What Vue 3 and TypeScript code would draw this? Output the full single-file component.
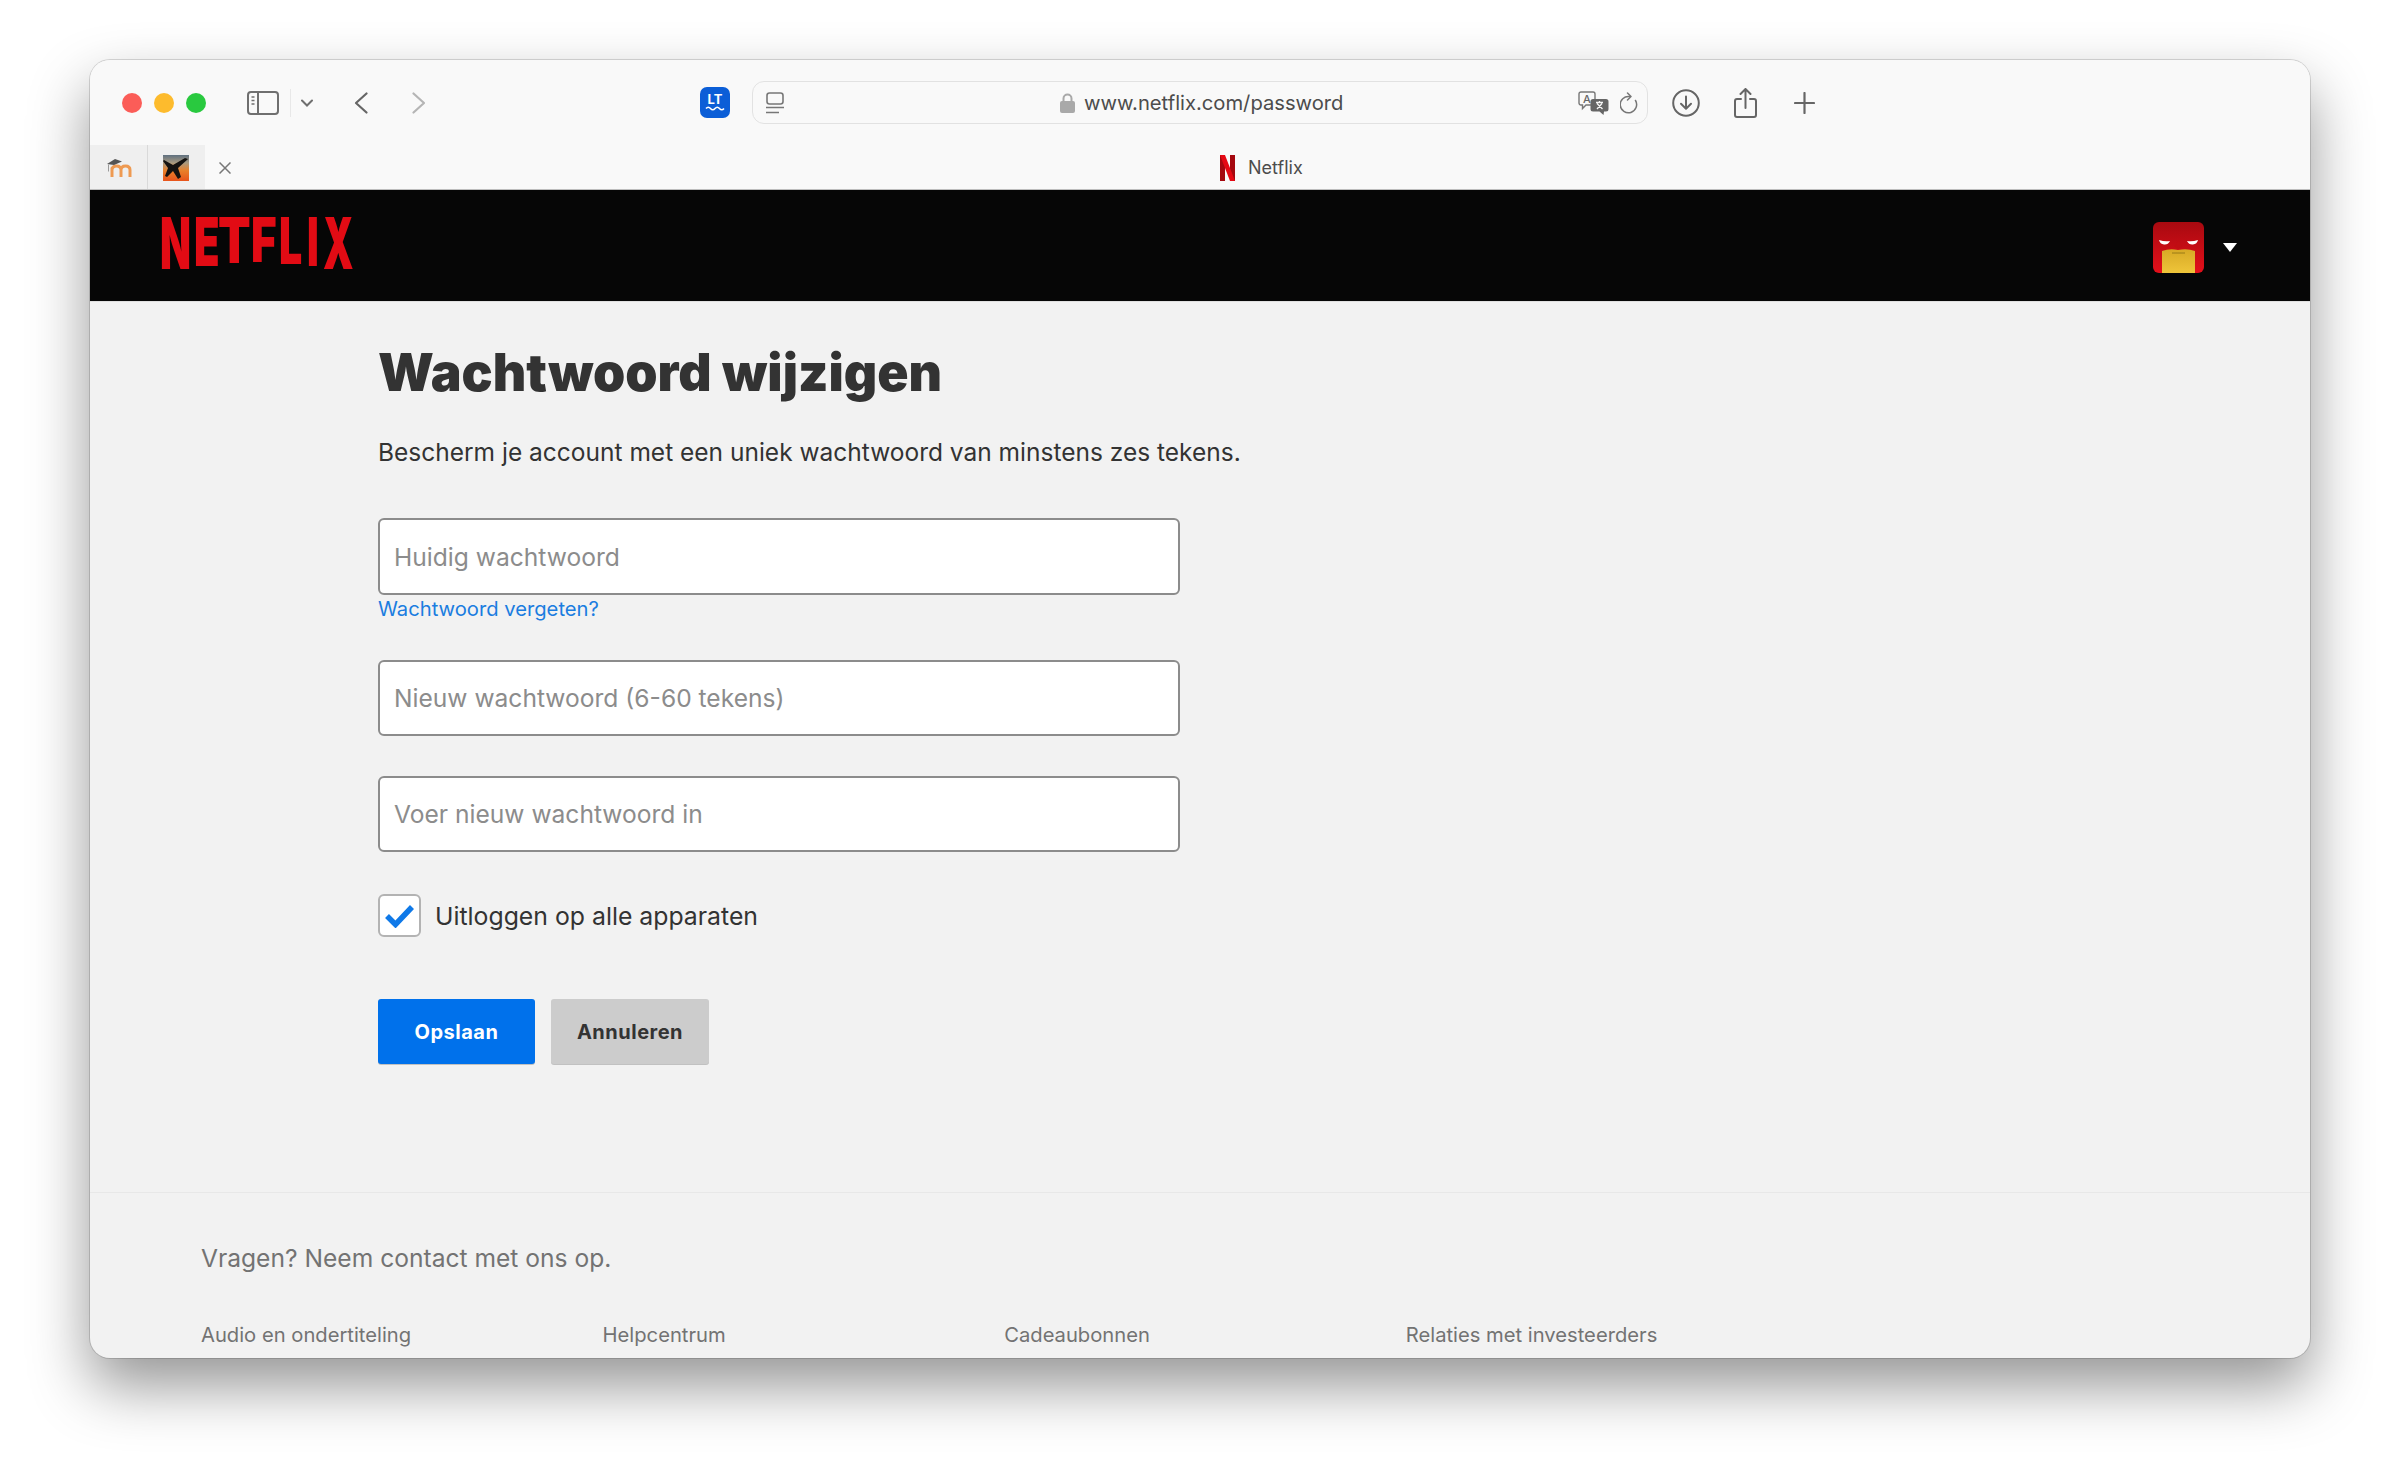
<script setup lang="ts">
const footerLinks: string[] = ['Audio en ondertiteling', 'Helpcentrum', 'Cadeaubonnen', 'Relaties met investeerders']
const logo: { c: string; w: number; sx: number; sy: number }[] = [
  { c: 'N', w: 33.5, sx: 0.56, sy: 1 },
  { c: 'E', w: 24, sx: 0.58, sy: 0.935 },
  { c: 'T', w: 33, sx: 0.66, sy: 0.88 },
  { c: 'F', w: 28, sx: 0.61, sy: 0.86 },
  { c: 'L', w: 28, sx: 0.57, sy: 0.9 },
  { c: 'I', w: 16, sx: 0.56, sy: 0.935 },
  { c: 'X', w: 30, sx: 0.54, sy: 1 }
]
</script>

<template>
  <div class="desktop">
    <div class="window">
      <div class="toolbar">
        <span class="dot red"></span>
        <span class="dot yellow"></span>
        <span class="dot green"></span>
        <svg class="i-side" width="32" height="24" viewBox="0 0 32 24" fill="none" stroke="#6f6f6f" stroke-width="2">
          <rect x="1" y="1" width="30" height="22" rx="3" />
          <path d="M11 1v22" />
          <path d="M4.500 6h3M4.500 9.500h3M4.500 13h3" stroke-width="1.500" />
        </svg>
        <span class="sep"></span>
        <svg class="i-chev" width="12" height="8" viewBox="0 0 12 8" fill="none" stroke="#6f6f6f" stroke-width="2" stroke-linecap="round"><path d="M1 1.500l5 5 5-5" /></svg>
        <svg class="i-back" width="14" height="22" viewBox="0 0 14 22" fill="none" stroke="#666" stroke-width="2.200" stroke-linecap="round" stroke-linejoin="round"><path d="M12.500 1.500L2 11l10.500 9.500" /></svg>
        <svg class="i-fwd" width="14" height="22" viewBox="0 0 14 22" fill="none" stroke="#b5b5b5" stroke-width="2.200" stroke-linecap="round" stroke-linejoin="round"><path d="M1.500 1.500L12 11 1.500 20.500" /></svg>
        <svg class="i-lt" width="30" height="31" viewBox="0 0 30 31">
          <rect width="30" height="31" rx="7" fill="#0b5ed7" />
          <text class="lt-text" x="15" y="16.500" text-anchor="middle">LT</text>
          <path d="M6 21.500q2.250-2.500 4.500 0t4.500 0 4.500 0 4.500 0" fill="none" stroke="#fff" stroke-width="1.600" />
        </svg>
        <div class="urlbar">
          <svg width="18" height="22" viewBox="0 0 18 22" fill="none" stroke="#777" stroke-width="1.600">
            <rect x="1" y="1" width="16" height="11" rx="2.500" />
            <path d="M0 15.500h18M0 20.500h13" />
          </svg>
          <svg class="i-lock" width="15" height="20" viewBox="0 0 15 20">
            <path d="M3.500 9V5.500a4 4 0 0 1 8 0V9" fill="none" stroke="#a9a9a9" stroke-width="2" />
            <rect y="8" width="15" height="12" rx="2" fill="#a9a9a9" />
          </svg>
          <span class="url">www.netflix.com/password</span>
          <svg class="i-trans" width="31" height="24" viewBox="0 0 31 24">
            <path d="M3 1h12a2 2 0 0 1 2 2v9a2 2 0 0 1-2 2H8l-3.500 3.500V14H3a2 2 0 0 1-2-2V3a2 2 0 0 1 2-2z" fill="#f9f9f9" stroke="#777" stroke-width="1.400" />
            <text class="tr-a" x="9" y="11.500" text-anchor="middle">A</text>
            <path d="M15 8h13a2.500 2.500 0 0 1 2.500 2.500V18a2.500 2.500 0 0 1-2.500 2.500h-2l-.5 3.500-4-3.500H15a2.500 2.500 0 0 1-2.500-2.500v-7.500A2.500 2.500 0 0 1 15 8z" fill="#666" />
            <path d="M18 11.500h7M21.500 10v1.500M24 12.500l-5 5.500M19 12.500l5.500 5.500" fill="none" stroke="#f5f5f5" stroke-width="1.300" />
          </svg>
          <svg class="i-reload" width="19" height="22" viewBox="0 0 19 22" fill="none" stroke="#777" stroke-width="1.500" stroke-linecap="round" stroke-linejoin="round">
            <path d="M15.500 8.500A8.200 8.200 0 1 1 9.500 4.500" />
            <path d="M7.500 1l3.500 3.500L7.500 8" />
          </svg>
        </div>
        <svg class="i-dl" width="28" height="28" viewBox="0 0 28 28" fill="none" stroke="#666" stroke-width="2" stroke-linecap="round" stroke-linejoin="round">
          <circle cx="14" cy="14" r="12.800" />
          <path d="M14 7.500v12M9 14.800l5 5 5-5" />
        </svg>
        <svg class="i-share" width="23" height="30" viewBox="0 0 23 30" fill="none" stroke="#666" stroke-width="2" stroke-linecap="round" stroke-linejoin="round">
          <path d="M7 11H3a2 2 0 0 0-2 2v14a2 2 0 0 0 2 2h17a2 2 0 0 0 2-2V13a2 2 0 0 0-2-2h-4" />
          <path d="M11.500 20V1.500M6.500 6l5-5 5 5" />
        </svg>
        <svg class="i-plus" width="21" height="22" viewBox="0 0 21 22" fill="none" stroke="#666" stroke-width="2.200" stroke-linecap="round"><path d="M10.500 1v20M1 11h19" /></svg>
      </div>

      <div class="tabs">
        <div class="tab first">
          <svg class="fav" width="27" height="20" viewBox="0 0 27 20" fill="none">
            <path d="M7 19V9.500M7 12q0-4 4.500-4T16 12v7M16 12q0-4 4.500-4t4.500 4v7" stroke="#ee9a52" stroke-width="3" />
            <path d="M2 6l8-5 7 2.500-8 3.500z" fill="#555" />
            <path d="M3.500 6.500v7" stroke="#999" stroke-width="1" />
          </svg>
        </div>
        <div class="tab">
          <svg class="fav pic" width="26" height="26" viewBox="0 0 26 26">
            <defs>
              <linearGradient id="sky" x1="0" y1="0" x2="0" y2="1">
                <stop offset="0" stop-color="#5f7080" />
                <stop offset=".3" stop-color="#a89a80" />
                <stop offset=".6" stop-color="#e8802a" />
                <stop offset="1" stop-color="#e8541c" />
              </linearGradient>
            </defs>
            <rect width="26" height="26" fill="url(#sky)" />
            <path d="M1 5l9 5 12-7 3 1-10 9 3 9-3 2-5-8-6 6-2-1 3-8-5-7z" fill="#141210" />
          </svg>
        </div>
        <svg class="i-close" width="12" height="12" viewBox="0 0 12 12" fill="none" stroke="#777" stroke-width="1.500"><path d="M.5.500l11 11M11.500.500l-11 11" /></svg>
        <svg class="i-n" width="15" height="26" viewBox="0 0 15 26">
          <path d="M0 0h5v26H0z" fill="#a5080f" />
          <path d="M10 0h5v26h-5z" fill="#a5080f" />
          <path d="M0 0h5l10 26h-5z" fill="#e50914" />
        </svg>
        <span class="tab-title">Netflix</span>
      </div>

      <header class="nf-head">
        <div class="nf-logo" aria-label="Netflix">
          <span v-for="l in logo" :key="l.c" class="slot" :style="{ width: l.w + 'px' }">
            <span class="glyph" :style="{ transform: `scale(${l.sx}, ${l.sy})` }">{{ l.c }}</span>
          </span>
        </div>
        <div class="profile">
          <svg width="51" height="51" viewBox="0 0 51 51">
            <defs>
              <linearGradient id="face" x1="0" y1="0" x2="0" y2="1">
                <stop offset="0" stop-color="#a80a10" />
                <stop offset="1" stop-color="#e30f1a" />
              </linearGradient>
              <linearGradient id="beard" x1="0" y1="0" x2="0" y2="1">
                <stop offset="0" stop-color="#d7a925" />
                <stop offset="1" stop-color="#efc53a" />
              </linearGradient>
            </defs>
            <rect width="51" height="51" rx="6" fill="url(#face)" />
            <path d="M9 51V29q8-3 16-1 9-2 17 1v22z" fill="url(#beard)" />
            <path d="M6 18q6 2 11 1-2 4-6 3.500T6 18zM45 18q-6 2-11 1 2 4 6 3.500t5-4.500z" fill="#fff" />
            <path d="M25.500 19l-4 5 4 3 4-3z" fill="#c00d13" />
            <path d="M19 31h13" stroke="#9a7a16" stroke-width="1" />
          </svg>
          <span class="caret"></span>
        </div>
      </header>

      <main class="content">
        <h1>Wachtwoord wijzigen</h1>
        <p class="sub">Bescherm je account met een uniek wachtwoord van minstens zes tekens.</p>
        <input class="field first-field" type="password" placeholder="Huidig wachtwoord" />
        <a class="forgot">Wachtwoord vergeten?</a>
        <input class="field second-field" type="password" placeholder="Nieuw wachtwoord (6-60 tekens)" />
        <input class="field third-field" type="password" placeholder="Voer nieuw wachtwoord in" />
        <label class="check">
          <span class="box">
            <svg width="29" height="24" viewBox="0 0 29 24" fill="none" stroke="#0f79e8" stroke-width="5.500"><path d="M2 12l8.500 8.500L27 3" /></svg>
          </span>
          <span>Uitloggen op alle apparaten</span>
        </label>
        <div class="buttons">
          <button class="btn save">Opslaan</button>
          <button class="btn cancel">Annuleren</button>
        </div>
      </main>

      <footer class="foot">
        <p class="question">Vragen? Neem contact met ons op.</p>
        <ul>
          <li v-for="link in footerLinks" :key="link">{{ link }}</li>
        </ul>
      </footer>
    </div>
  </div>
</template>

<style scoped>
.desktop {
  box-sizing: border-box;
  width: 2400px;
  height: 1476px;
  padding: 60px 90px 0;
  overflow: hidden;
  background: #fff;
  font-family: Inter, "Liberation Sans", sans-serif;
}
.window {
  display: flex;
  flex-direction: column;
  width: 2220px;
  height: 1298px;
  border-radius: 20px;
  overflow: hidden;
  background: #f2f2f2;
  box-shadow: 0 0 0 1px rgba(0, 0, 0, 0.14), 0 28px 60px rgba(0, 0, 0, 0.42);
}
.toolbar {
  display: flex;
  align-items: center;
  flex: none;
  height: 85px;
  background: #f9f9f9;
}
svg { display: block; flex: none; }
.dot { width: 20px; height: 20px; border-radius: 50%; margin-left: 12px; }
.red { background: #fb5d58; margin-left: 32px; }
.yellow { background: #fdbb2d; }
.green { background: #29c93f; }
.i-side { margin-left: 41px; }
.sep { width: 1px; height: 28px; margin-left: 11px; background: #e8e8e8; }
.i-chev { margin-left: 10px; }
.i-back { margin-left: 41px; }
.i-fwd { margin-left: 44px; }
.i-lt { margin-left: 274px; }
.lt-text { font: 700 13px Inter, sans-serif; fill: #fff; }
.urlbar {
  box-sizing: border-box;
  display: flex;
  align-items: center;
  width: 896px;
  height: 43px;
  margin-left: 22px;
  padding: 0 8px 0 13px;
  border: 1.5px solid #e2e2e2;
  border-radius: 12px;
}
.i-lock { margin-left: 276px; }
.url { margin-left: 9px; font-size: 20.2px; line-height: 26px; padding-top: 1px; color: #4c4c4c; }
.i-trans { margin-left: auto; }
.tr-a { font: 500 11px Inter, sans-serif; fill: #666; }
.i-reload { margin-left: 11px; }
.i-dl { margin-left: 24px; }
.i-share { margin-left: 34px; }
.i-plus { margin-left: 37px; }
.tabs {
  display: flex;
  align-items: center;
  flex: none;
  height: 44px;
  background: #f9f9f9;
}
.tab {
  display: flex;
  align-items: center;
  justify-content: center;
  width: 57px;
  height: 100%;
  background: #efefef;
  border-left: 1px solid #d9d9d9;
}
.tab.first { border-left: 0; }
.fav { margin-top: 2px; }
.pic { margin-right: 2px; }
.i-close { margin-left: 14px; margin-top: 1px; }
.i-n { margin-left: 989px; margin-top: 2px; }
.tab-title { margin-left: 13px; padding-top: 1px; font-size: 18px; color: #4c4c4c; }
.nf-head {
  display: flex;
  align-items: center;
  justify-content: space-between;
  flex: none;
  box-sizing: border-box;
  height: 113px;
  padding: 0 73px 0 72px;
  background: #060606;
  border-top: 1px solid #bdbdbd;
  border-bottom: 1px solid #e0e0e0;
}
.nf-logo {
  display: flex;
  align-self: flex-start;
  height: 54px;
  margin: 26px 0 0 -2px;
}
.slot { display: block; flex: none; height: 54px; }
.glyph {
  display: block;
  width: max-content;
  height: 54px;
  font: 900 72px/54px Inter, "Liberation Sans", sans-serif;
  color: #e20b14;
  transform-origin: 0 0;
}
.profile { display: flex; align-items: center; gap: 19px; margin-top: 4px; }
.caret {
  width: 0;
  height: 0;
  border: 7.5px solid transparent;
  border-top: 9px solid #fff;
  border-bottom: 0;
}
.content {
  flex: none;
  box-sizing: border-box;
  padding: 40px 0 128px 288px;
  display: flex;
  flex-direction: column;
  align-items: flex-start;
  border-bottom: 1px solid #e8e8e8;
}
h1 {
  margin: 0;
  font-size: 51.7px;
  line-height: 60px;
  font-weight: 900;
  color: #333;
}
.sub {
  margin: 34px 0 0;
  font-size: 24.5px;
  line-height: 32px;
  color: #333;
}
.field {
  box-sizing: border-box;
  display: block;
  width: 802px;
  height: 76px;
  padding: 0 14px;
  border: 2px solid #8c8c8c;
  border-radius: 6px;
  background: #fff;
  font: 400 24.6px Inter, sans-serif;
  outline: none;
}
.field::placeholder { color: #8c8c8c; opacity: 1; }
.first-field { margin-top: 50px; height: 77px; }
.second-field { margin-top: 39px; }
.third-field { margin-top: 40px; }
.forgot {
  margin-top: 2px;
  font-size: 20.2px;
  line-height: 24px;
  color: #1b7de0;
}
.check {
  display: flex;
  align-items: center;
  gap: 14px;
  margin-top: 42px;
  font-size: 24.8px;
  color: #333;
}
.box {
  box-sizing: border-box;
  display: flex;
  align-items: center;
  justify-content: center;
  width: 43px;
  height: 43px;
  border: 2px solid #b3b3b3;
  border-radius: 6px;
  background: #fff;
}
.buttons { display: flex; gap: 16px; margin-top: 62px; }
.btn {
  width: 158px;
  height: 65px;
  padding: 0;
  border: 0;
  border-radius: 3px;
  font: 700 20px Inter, sans-serif;
  letter-spacing: 0.5px;
  box-shadow: 0 1px 0 rgba(0, 0, 0, 0.2);
}
.save { width: 157px; background: #0071eb; color: #fff; }
.cancel { background: #ccc; color: #333; }
.foot { flex: 1; padding: 49px 0 0 111px; color: #737373; }
.question { margin: 0; font-size: 24.6px; line-height: 32px; }
.foot ul {
  display: grid;
  grid-template-columns: repeat(4, 401.6px);
  margin: 48px 0 0;
  padding: 0;
  list-style: none;
  font-size: 20.2px;
  line-height: 26px;
}
</style>

<style>
html, body { margin: 0; background: #fff; }
</style>
